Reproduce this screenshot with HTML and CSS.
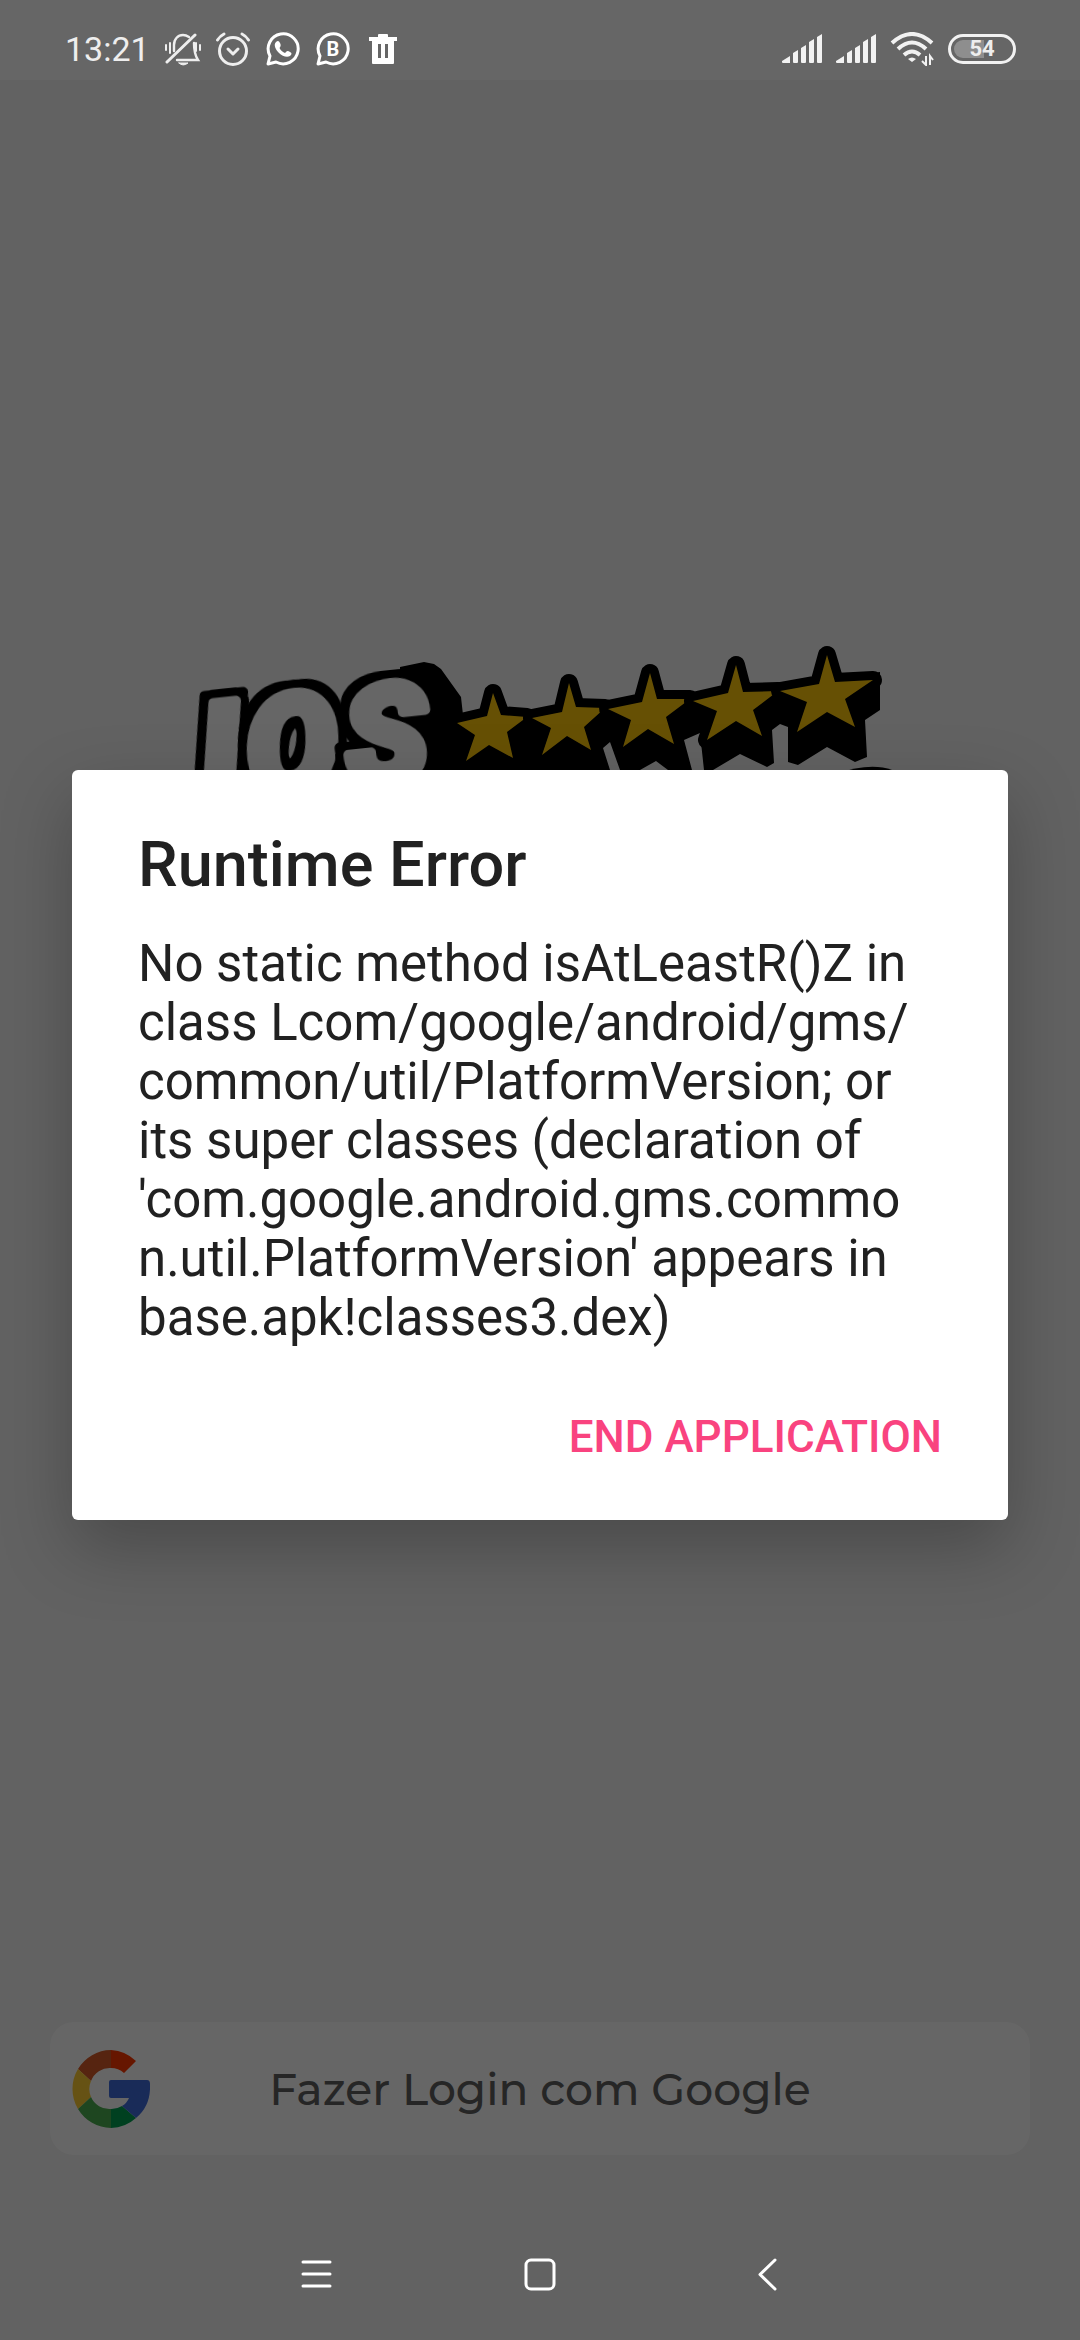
FILE: index.html
```html
<!DOCTYPE html>
<html lang="pt-BR">
<head>
  <meta charset="UTF-8">
  <meta name="viewport" content="width=device-width, initial-scale=1.0">
  <title>Runtime Error</title>
  <link rel="stylesheet" href="styles.css">
</head>
<body>
  <header class="status-bar">
    <span class="time">13:21</span>
    <div class="notifications">
      <!-- vibrate / silent -->
      <svg class="icon" viewBox="0 0 36 36" fill="none" stroke="#eee" stroke-width="2.4" stroke-linecap="round">
        <path d="M9 20V14C9 8 13 4 18 4Q21 4 24 6M29 12Q29 23 33 29H12"/>
        <path d="M1 14V19M5 12V22M35 14V19M31 12V20" stroke-width="2"/>
        <path d="M2 31L30 4" stroke-width="3"/>
        <path d="M14 32H23Q18 36 14 32Z" fill="#eee" stroke-width="1"/>
      </svg>
      <!-- alarm -->
      <svg class="icon" viewBox="0 0 36 36" fill="none" stroke="#eee" stroke-width="3" stroke-linecap="round" stroke-linejoin="round">
        <circle cx="18" cy="20" r="13.5"/>
        <path d="M13 18L18 23L23 18M2.500 9Q5 5 9 3M33.500 9Q31 5 27 3"/>
      </svg>
      <!-- whatsapp -->
      <svg class="icon" viewBox="0 0 36 36">
        <path d="M3 33L5 25A15 15 0 1 1 11 31Z" fill="none" stroke="#fff" stroke-width="3" stroke-linejoin="round"/>
        <path d="M11 11C13 9 14 10 15 12C16 14 16 15 14.500 17C16 20 18 21 20 22C22 20 22 19 25 21C27 22 27 23 25 25C22 27 17 25 14 22C11 19 8 14 11 11Z" fill="#fff"/>
      </svg>
      <!-- whatsapp business -->
      <svg class="icon" viewBox="0 0 36 36">
        <path d="M3 33L5 25A15 15 0 1 1 11 31Z" fill="none" stroke="#fff" stroke-width="3" stroke-linejoin="round"/>
        <text class="icon-letter" x="18" y="25" text-anchor="middle">B</text>
      </svg>
      <!-- trash -->
      <svg class="icon" viewBox="0 0 36 36">
        <path d="M4 6H13V4Q13 3 14 3H22Q23 3 23 4V6H32V10H29V32Q29 33 28 33H8Q7 33 7 32V10H4ZM13 13V27H16V13ZM20 13V27H23V13Z" fill="#fff" fill-rule="evenodd"/>
      </svg>
    </div>
    <div class="system">
      <svg class="signal" viewBox="0 0 40 30" fill="#f2f2f2">
        <path d="M0 27L8 22V29H1Q0 29 0 28ZM11 19L16 16V28Q16 29 15 29H12Q11 29 11 28ZM19 14L24 11V28Q24 29 23 29H20Q19 29 19 28ZM27 8L32 5V28Q32 29 31 29H28Q27 29 27 28ZM35 3L40 0V28Q40 29 39 29H36Q35 29 35 28Z"/>
      </svg>
      <svg class="signal" viewBox="0 0 40 30" fill="#f2f2f2">
        <path d="M0 27L8 22V29H1Q0 29 0 28ZM11 19L16 16V28Q16 29 15 29H12Q11 29 11 28ZM19 14L24 11V28Q24 29 23 29H20Q19 29 19 28ZM27 8L32 5V28Q32 29 31 29H28Q27 29 27 28ZM35 3L40 0V28Q40 29 39 29H36Q35 29 35 28Z"/>
      </svg>
      <svg class="wifi" viewBox="0 0 44 34" fill="none" stroke="#f2f2f2" stroke-width="4">
        <path d="M2 11Q22 -7 42 11M8 17Q22 4 36 17M14 23Q22 16 30 23"/>
        <path d="M18 27Q22 24 26 27L22 30Z" fill="#f2f2f2" stroke="none"/>
        <path d="M36 24V33L32 29M40 33V24L43 28" stroke-width="2"/>
      </svg>
      <span class="battery"><span class="battery-level" style="width: 54%"></span><span class="battery-text">54</span></span>
    </div>
  </header>

  <main class="screen">
    <svg class="logo" viewBox="180 640 720 240" role="img" aria-label="Logo">
      <path d="M400 667L424 662L434 664L441 669L461 697L463 715L536 712L600 705L690 695L780 686L880 672L880 710L865 720L867 757L855 762L827 747L798 765L788 762L788 727L780 724L772 730L774 763L767 767L740 754L713 770L704 770L700 733L684 740L692 770L668 770L656 761L640 770L620 770L610 742L603 748L610 770L430 780L400 780Z"/>
      <path d="M836 774Q870 762 892 770V780H836Z"/>
      <g class="logo-text" transform="rotate(-6 205 790)">
        <text x="204" y="802">I</text>
        <text x="250" y="802">O</text>
        <text x="349" y="802">S</text>
      </g>
      <g class="stars">
        <path d="M493 693L501 715L527 717L507 732L513 758L489 745L466 761L475 735L457 723L487 716Z"/>
        <path d="M569 683L576 707L605 708L584 727L591 750L567 736L542 755L551 728L532 718L562 712Z"/>
        <path d="M650 673L657 699L690 699L666 717L674 744L648 729L623 747L631 720L608 709L642 702Z"/>
        <path d="M736 665L743 692L778 691L753 710L762 736L736 721L707 740L717 711L693 701L728 693Z"/>
        <path d="M827 655L835 682L873 680L845 699L855 727L827 712L797 732L807 702L780 691L819 684Z"/>
      </g>
    </svg>

    <button class="login" type="button">
      <svg class="google" viewBox="0 0 78 78">
        <path d="M39 0A39 39 0 0 1 64 11L52 23A20 20 0 0 0 39 18Z" fill="#ff3700"/>
        <path d="M39 0V18A20 20 0 0 0 19 31L6 19A39 39 0 0 1 39 0Z" fill="#d65b28"/>
        <path d="M6 19L19 31A20 20 0 0 0 19 47L6 59A39 39 0 0 1 6 19Z" fill="#ffcc33"/>
        <path d="M6 59L19 47A20 20 0 0 0 39 59V78A39 39 0 0 1 6 59Z" fill="#4caf50"/>
        <path d="M39 59A20 20 0 0 0 50 56L64 68A39 39 0 0 1 39 78Z" fill="#00a050"/>
        <path d="M39 30H75Q78 30 78 34Q79 56 64 68L50 56Q55 53 57 48H39Q37 48 37 46V32Q37 30 39 30Z" fill="#3f6bdc"/>
      </svg>
      <span class="login-text">Fazer Login com Google</span>
    </button>

    <div class="overlay">
      <section class="dialog" role="alertdialog" aria-labelledby="dialogTitle">
        <h1 class="dialog-title" id="dialogTitle">Runtime Error</h1>
        <p class="dialog-message">No static method isAtLeastR()Z in<br>class Lcom/google/android/gms/<br>common/util/PlatformVersion; or<br>its super classes (declaration of<br>'com.google.android.gms.commo<br>n.util.PlatformVersion' appears in<br>base.apk!classes3.dex)</p>
        <button class="dialog-button" type="button">END APPLICATION</button>
      </section>
    </div>
  </main>

  <nav class="nav-bar">
    <button class="nav-button" type="button" aria-label="Recent apps">
      <svg class="nav-icon" viewBox="0 0 36 36"><path d="M6 5H33M6 17H33M6 29H33"/></svg>
    </button>
    <button class="nav-button" type="button" aria-label="Home">
      <svg class="nav-icon" viewBox="0 0 36 36"><rect x="4" y="3" width="28" height="29" rx="5"/></svg>
    </button>
    <button class="nav-button" type="button" aria-label="Back">
      <svg class="nav-icon" viewBox="0 0 36 36"><path d="M28 3L13 17.500L28 32"/></svg>
    </button>
  </nav>
</body>
</html>
```
FILE: styles.css
```css
* {
  box-sizing: border-box;
}

body {
  margin: 0;
  min-height: 100vh;
  display: flex;
  flex-direction: column;
  background-color: #626262;
  font-family: Roboto, sans-serif;
}

button {
  border: none;
  background: none;
  padding: 0;
  font-family: inherit;
  cursor: pointer;
}

svg {
  display: block;
}

/* status bar */
.status-bar {
  display: flex;
  align-items: center;
  height: 80px;
  padding: 18px 64px 0 65px;
  background-color: #666;
  color: #eee;
}

.time {
  width: 100px;
  font-size: 34px;
  line-height: 40px;
}

.notifications {
  display: flex;
  gap: 14px;
}

.icon {
  width: 36px;
  height: 36px;
}

.icon-letter {
  font-size: 20px;
  font-weight: 700;
  fill: #fff;
}

.system {
  display: flex;
  align-items: center;
  gap: 14px;
  margin-left: auto;
}

.signal {
  width: 40px;
  height: 30px;
}

.wifi {
  width: 44px;
  height: 34px;
}

.battery {
  position: relative;
  width: 68px;
  height: 30px;
  padding: 3px;
  border: 3px solid #f2f2f2;
  border-radius: 15px;
}

.battery-level {
  display: block;
  height: 100%;
  border-radius: 9px 0 0 9px;
  background-color: #8e8e8e;
}

.battery-text {
  position: absolute;
  inset: 0;
  font-size: 22px;
  font-weight: 700;
  line-height: 24px;
  text-align: center;
}

/* login screen */
.screen {
  position: relative;
  flex: 1;
  display: flex;
  flex-direction: column;
  padding: 560px 50px 55px;
  background-color: #f5f5f5;
}

.logo {
  width: 720px;
  max-width: 100%;
  margin: 0 auto;
}

.logo-text text {
  font-family: Roboto, sans-serif;
  font-size: 136px;
  font-style: italic;
  font-weight: 900;
  fill: #fff;
  stroke: #fff;
  stroke-width: 10px;
  stroke-linejoin: round;
  filter: drop-shadow(8px 0 0 #000) drop-shadow(-8px 0 0 #000) drop-shadow(0 8px 0 #000) drop-shadow(0 -8px 0 #000);
}

.stars {
  fill: #ffc80c;
  stroke: #000;
  stroke-width: 18px;
  stroke-linejoin: round;
  paint-order: stroke;
}

.login {
  display: grid;
  grid-template-columns: 78px 1fr 78px;
  align-items: center;
  height: 133px;
  margin-top: auto;
  padding: 0 22px;
  border-radius: 24px;
  background-color: #fff;
}

.google {
  width: 78px;
  height: 78px;
}

.login-text {
  color: #606060;
  font-family: Montserrat, Inter, sans-serif;
  font-size: 44px;
  font-weight: 500;
}

/* error dialog */
.overlay {
  position: absolute;
  inset: 0;
  display: flex;
  align-items: center;
  padding: 0 72px;
  background-color: rgba(0, 0, 0, 0.6);
}

.dialog {
  width: 100%;
  padding: 58px 66px 57px;
  border-radius: 6px;
  background-color: #fff;
  box-shadow: 0 28px 70px rgba(0, 0, 0, 0.25);
  color: #212121;
}

.dialog-title {
  margin: 0 0 32px;
  font-size: 63px;
  font-weight: 500;
  line-height: 74px;
}

.dialog-message {
  margin: 0 0 64px;
  font-size: 51px;
  line-height: 59px;
}

.dialog-button {
  display: block;
  margin-left: auto;
  color: #f9437f;
  font-size: 44px;
  font-weight: 500;
  line-height: 52px;
}

/* navigation bar */
.nav-bar {
  display: flex;
  justify-content: center;
  height: 130px;
}

.nav-button {
  display: flex;
  align-items: center;
  justify-content: center;
  width: 225px;
}

.nav-icon {
  width: 36px;
  height: 36px;
  fill: none;
  stroke: #fff;
  stroke-width: 3px;
  stroke-linecap: round;
  stroke-linejoin: round;
}
```
